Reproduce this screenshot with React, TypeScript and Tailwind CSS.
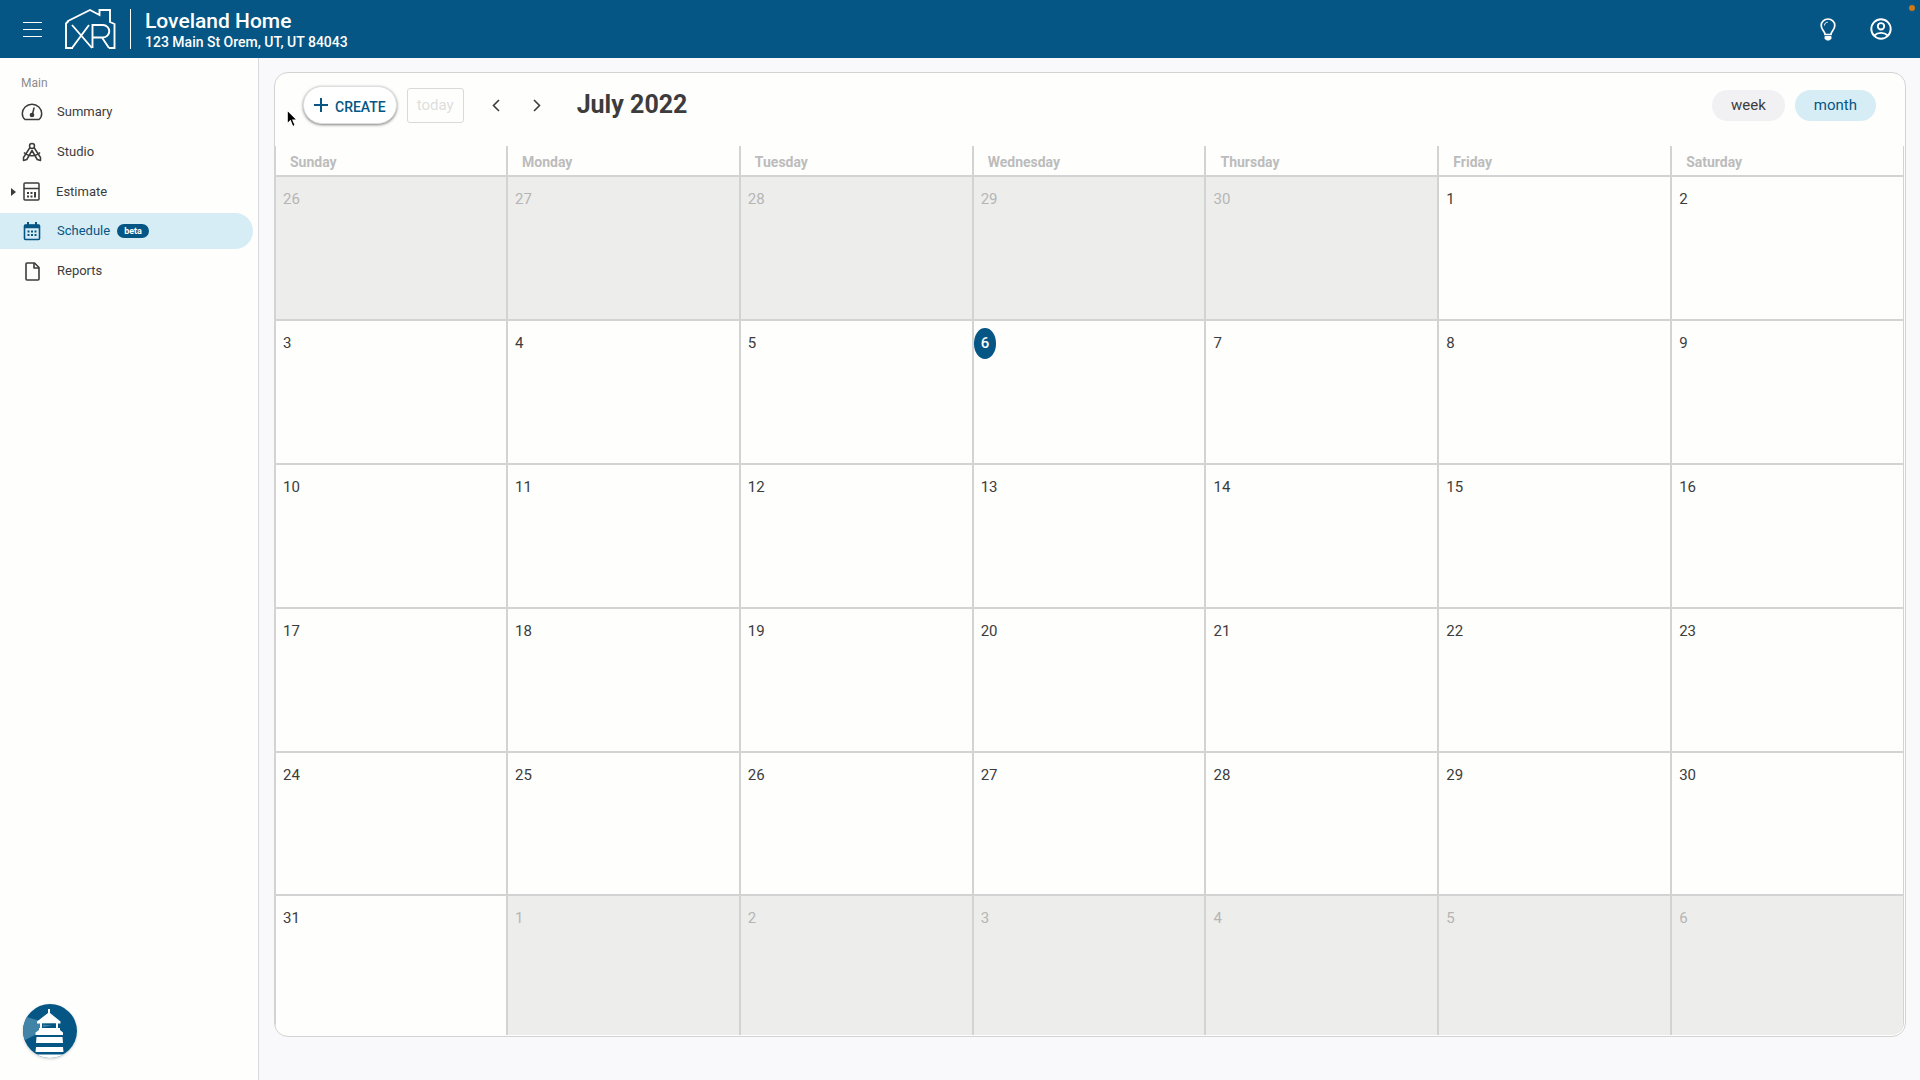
import type { ReactNode } from 'react';

type Day = { n: number; outside?: boolean; today?: boolean };

const weekdays = ['Sunday', 'Monday', 'Tuesday', 'Wednesday', 'Thursday', 'Friday', 'Saturday'];

const days: Day[] = [
  ...[26, 27, 28, 29, 30].map((n) => ({ n, outside: true })),
  ...Array.from({ length: 31 }, (_, i) => ({ n: i + 1, today: i + 1 === 6 })),
  ...[1, 2, 3, 4, 5, 6].map((n) => ({ n, outside: true })),
];

const weeks: Day[][] = Array.from({ length: 6 }, (_, w) => days.slice(w * 7, w * 7 + 7));

function LogoIcon() {
  return (
    <svg viewBox="0 0 52 42" className="h-[42px] w-[52px]" fill="none" stroke="currentColor" strokeWidth="1.9">
      <path d="M9 40H2V15.500L4 13.500V13L26 2l9.500 5V2H46v12l4.500 2v24H45" />
      <path d="M8 17l20 23M25 17L8 40" />
      <path d="M28.500 40V17H39a6 6 0 0 1 0 12.500H28.500M38 29.500L45 40" />
    </svg>
  );
}

function GaugeIcon() {
  return (
    <svg viewBox="0 0 22 18" className="h-[18px] w-[22px]" fill="none" stroke="currentColor" strokeWidth="1.5">
      <path d="M4 16.500h14c1.800-1.500 2.700-3.600 2.700-6A9.700 9.300 0 0 0 1.300 10.500c0 2.400.9 4.500 2.700 6z" strokeLinejoin="round" />
      <path d="M13 5L11.500 11" strokeLinecap="round" />
      <circle cx="11" cy="12" r="1.600" fill="currentColor" />
    </svg>
  );
}

function CompassIcon() {
  return (
    <svg viewBox="0 0 20 20" className="h-5 w-5" fill="none" stroke="currentColor" strokeWidth="1.500" strokeLinejoin="round">
      <circle cx="10" cy="4" r="2.500" />
      <path d="M8 5.500L1.500 15.500v3l3.300-1L10 8.500l5.200 9 3.300 1v-3L12 5.500" />
      <path d="M2 10.500c4 4.300 12 4.300 16 0" />
    </svg>
  );
}

function CalculatorIcon() {
  return (
    <svg viewBox="0 0 17 19" className="h-[19px] w-[17px]" fill="none" stroke="currentColor" strokeWidth="1.500">
      <rect x="1" y="1" width="15" height="17" rx="1" />
      <path d="M1 6.500h15" />
      <path d="M4 11h2M7.500 11h2M4 14.500h2M7.500 14.500h2M12 10v5.500" strokeWidth="2" />
    </svg>
  );
}

function CalendarIcon() {
  return (
    <svg viewBox="0 0 18 20" className="h-5 w-[18px]" fill="none" stroke="currentColor" strokeWidth="1.600">
      <rect x="1.500" y="4" width="15" height="14.500" rx="1" />
      <path d="M1.500 5.500h15" strokeWidth="3.500" />
      <path d="M5 1v4M13 1v4" strokeWidth="2" />
      <path d="M4.500 10.500h2M8 10.500h2M11.500 10.500h2M4.500 14h2M8 14h2M11.500 14h2" strokeWidth="2" />
    </svg>
  );
}

function FileIcon() {
  return (
    <svg viewBox="0 0 15 19" className="h-[19px] w-[15px]" fill="none" stroke="currentColor" strokeWidth="1.600" strokeLinejoin="round">
      <path d="M2 1h7.500L14 5.500V17a1 1 0 0 1-1 1H2a1 1 0 0 1-1-1V2a1 1 0 0 1 1-1z" />
      <path d="M9 1v5h5" />
    </svg>
  );
}

function BulbIcon() {
  return (
    <svg viewBox="0 0 16 23" className="h-[23px] w-4" fill="none" stroke="currentColor" strokeWidth="1.700">
      <path d="M5 16.500c0-3-3.800-4.800-3.800-9a6.800 6.500 0 0 1 13.600 0c0 4.200-3.800 6-3.800 9z" />
      <path d="M4.500 7.500c0-2 1.300-3.300 3.300-3.300" strokeWidth="1" />
      <path d="M5 18.500h6v2l-1.500 1.500h-3L5 20.500z" fill="currentColor" strokeWidth="1" />
    </svg>
  );
}

function AccountIcon() {
  return (
    <svg viewBox="0 0 22 22" className="h-[22px] w-[22px]" fill="none" stroke="currentColor" strokeWidth="1.900">
      <circle cx="11" cy="11" r="9.700" />
      <circle cx="11" cy="8.300" r="3.200" />
      <path d="M4.300 17.500c3.700-3.500 9.700-3.500 13.400 0" />
    </svg>
  );
}

function LighthouseIcon() {
  return (
    <svg viewBox="0 0 54 54" className="h-[54px] w-[54px]">
      <clipPath id="disc">
        <circle cx="27" cy="27" r="27" />
      </clipPath>
      <g clipPath="url(#disc)">
        <rect width="54" height="54" fill="#055684" />
        <path d="M0 12L30 20.500v1.500L0 37z" fill="#4283a8" />
        <path d="M0 50.500h54V54H0z" fill="#fff" />
        <g fill="#fff">
          <path d="M25 5h2v4l10.500 8.500v2H14v-2L25 9z" />
          <path d="M17 19h2v5h-2zM33 19h2v5h-2z" />
          <path d="M16 24h21v2l3 2.500V31H12.500v-2.500L16 26z" />
          <path d="M13.500 33h26l.5 6H13zM13 43h27l.5 5H12.500z" />
        </g>
        <path d="M19 19.500h14V24H19z" fill="#055684" />
        <path d="M20 20.500l9 1-9 1.500z" fill="#4283a8" />
      </g>
    </svg>
  );
}

function NavItem({ icon, label, active, badge, expandable }: {
  icon: ReactNode; label: string; active?: boolean; badge?: string; expandable?: boolean;
}) {
  return (
    <li>
      <a
        href="#"
        aria-current={active ? 'page' : undefined}
        className={
          active
            ? 'mr-[5px] flex h-9 items-center rounded-r-full bg-[#d7edf5] text-[#055684]'
            : expandable
              ? 'mr-[5px] flex h-[35px] items-center text-[#3c3c3c]'
              : 'mr-[5px] flex h-9 items-center text-[#3c3c3c]'
        }
      >
        <span className={expandable ? 'flex w-5 justify-end pr-1' : 'w-[21px]'}>
          {expandable && (
            <svg viewBox="0 0 5 8" className="h-2 w-[5px]" fill="currentColor"><path d="M0 0l5 4-5 4z" /></svg>
          )}
        </span>
        <span className={expandable ? 'w-9' : 'w-[36px]'}>
          <span className="flex w-[22px] justify-center">{icon}</span>
        </span>
        <span className="text-[13px] leading-4">{label}</span>
        {badge && (
          <span className="ml-[7px] rounded-full bg-[#055684] px-[7px] text-[9px] leading-[14px] font-bold text-white">{badge}</span>
        )}
      </a>
    </li>
  );
}

export default function App() {
  return (
    <div className="flex min-h-screen flex-col bg-[#f9f9fc] font-[Roboto,sans-serif] text-[#3c3c3c]">
      <header className="relative flex h-[58px] items-center bg-[#055684] text-white">
        <button type="button" aria-label="Menu" className="ml-[23px] flex w-[19px] flex-col gap-[6px]">
          <span className="h-px w-full bg-white" />
          <span className="h-px w-full bg-white" />
          <span className="h-px w-full bg-white" />
        </button>
        <a href="#" aria-label="Home" className="ml-[22px]"><LogoIcon /></a>
        <div className="ml-[14px] h-10 w-px bg-white" />
        <div className="ml-[14px] pt-[2px] font-medium">
          <h1 className="text-[21px] leading-6">Loveland Home</h1>
          <p className="text-sm leading-[18px]">123 Main St Orem, UT, UT 84043</p>
        </div>
        <div className="mr-7 ml-auto flex items-center gap-[34px]">
          <button type="button" aria-label="Tips"><BulbIcon /></button>
          <button type="button" aria-label="Account"><AccountIcon /></button>
        </div>
        <span className="absolute top-[5px] right-[5px] h-[6px] w-[6px] rounded-full bg-[#d07a14]" />
      </header>

      <div className="flex grow">
        <aside className="flex w-[259px] shrink-0 flex-col border-r border-[#d9d9de] bg-[#fefefd]">
          <h2 className="mt-[17px] ml-[21px] text-xs leading-4 text-[#8c8c8c]">Main</h2>
          <nav className="mt-[3px]">
            <ul className="flex flex-col gap-1">
              <NavItem icon={<GaugeIcon />} label="Summary" />
              <NavItem icon={<CompassIcon />} label="Studio" />
              <NavItem icon={<CalculatorIcon />} label="Estimate" expandable />
              <NavItem icon={<CalendarIcon />} label="Schedule" active badge="beta" />
              <NavItem icon={<FileIcon />} label="Reports" />
            </ul>
          </nav>
          <button type="button" aria-label="Help" className="mt-auto mb-[22px] ml-[23px] h-[54px] w-[54px] rounded-full shadow-[0_1px_3px_rgba(0,0,0,0.2)]">
            <LighthouseIcon />
          </button>
        </aside>

        <main className="grow pt-[14px] pr-[14px] pb-[43px] pl-[15px]">
          <section className="relative overflow-hidden rounded-[14px] border border-[#d3d3d3] bg-[#fefefd] pr-px pb-px">
            <div className="flex h-[73px] items-center pr-7 pb-[9px] pl-7">
              <button
                type="button"
                className="flex h-[38px] items-center rounded-full border border-[#dedede] bg-white px-[10px] text-[#055684] shadow-[0_1px_3px_rgba(0,0,0,0.5)]"
              >
                <svg viewBox="0 0 14 14" className="h-[14px] w-[14px]" fill="none" stroke="currentColor" strokeWidth="2">
                  <path d="M7 0v14M0 7h14" />
                </svg>
                <span className="mt-[3px] ml-[7px] text-sm font-medium">CREATE</span>
              </button>
              <button type="button" disabled className="ml-[10px] h-[35px] rounded-[3px] border border-[#d9d9d9] px-[9px] text-[15px] text-[#dedede]">
                today
              </button>
              <button type="button" aria-label="Previous month" className="ml-7">
                <svg viewBox="0 0 8 13" className="h-[13px] w-2" fill="none" stroke="currentColor" strokeWidth="1.600"><path d="M7 1L1.500 6.500 7 12" /></svg>
              </button>
              <button type="button" aria-label="Next month" className="ml-[33px]">
                <svg viewBox="0 0 8 13" className="h-[13px] w-2" fill="none" stroke="currentColor" strokeWidth="1.600"><path d="M1 1l5.500 5.500L1 12" /></svg>
              </button>
              <h2 className="ml-9 text-[25px] leading-8 font-bold">July 2022</h2>
              <div className="ml-auto flex gap-[10px] text-[15px]">
                <button type="button" className="h-[31px] rounded-full bg-[#f1f1f4] px-[19px]">week</button>
                <button type="button" className="h-[31px] rounded-full bg-[#d7edf5] px-[19px] text-[#055684]">month</button>
              </div>
            </div>

            <table className="w-full table-fixed border-separate border-spacing-0 overflow-hidden rounded-b-[13px] border-r border-[#d3d3d3]">
              <thead>
                <tr>
                  {weekdays.map((d) => (
                    <th
                      key={d}
                      scope="col"
                      className="h-[31px] border-b-2 border-l-2 border-[#d3d3d3] px-[14px] pt-[3px] text-left text-sm leading-5 font-bold text-[#bcbcbc] first:w-[231px] first:border-l"
                    >
                      {d}
                    </th>
                  ))}
                </tr>
              </thead>
              <tbody>
                {weeks.map((week, w) => (
                  <tr key={w} className={w === 5 ? 'h-[139px]' : w === 4 ? 'h-[143px]' : 'h-36'}>
                    {week.map((day, i) => (
                      <td
                        key={i}
                        className={
                          (day.outside ? 'bg-[#ededec] text-[#b5b5b5] ' : 'text-[#3c3c3c] ') +
                          (w === 5 ? '' : 'border-b-2 ') +
                          'border-l-2 border-[#d3d3d3] pt-[7px] align-top text-[15px] first:border-l'
                        }
                      >
                        <span
                          className={
                            day.today
                              ? 'inline-block h-[31px] rounded-[50%] bg-[#055684] px-[7px] leading-[31px] font-medium text-white'
                              : 'inline-block h-[31px] px-[7px] leading-[31px]'
                          }
                        >
                          {day.n}
                        </span>
                      </td>
                    ))}
                  </tr>
                ))}
              </tbody>
            </table>

            <svg viewBox="0 0 12 18" className="pointer-events-none absolute top-[36px] left-[11px] h-[19px] w-[13px]" fill="#000" stroke="#fff">
              <path d="M1 1v13l3-3 2.200 5.500 2.300-1L6.300 10.500H10.500z" />
            </svg>
          </section>
        </main>
      </div>
    </div>
  );
}
